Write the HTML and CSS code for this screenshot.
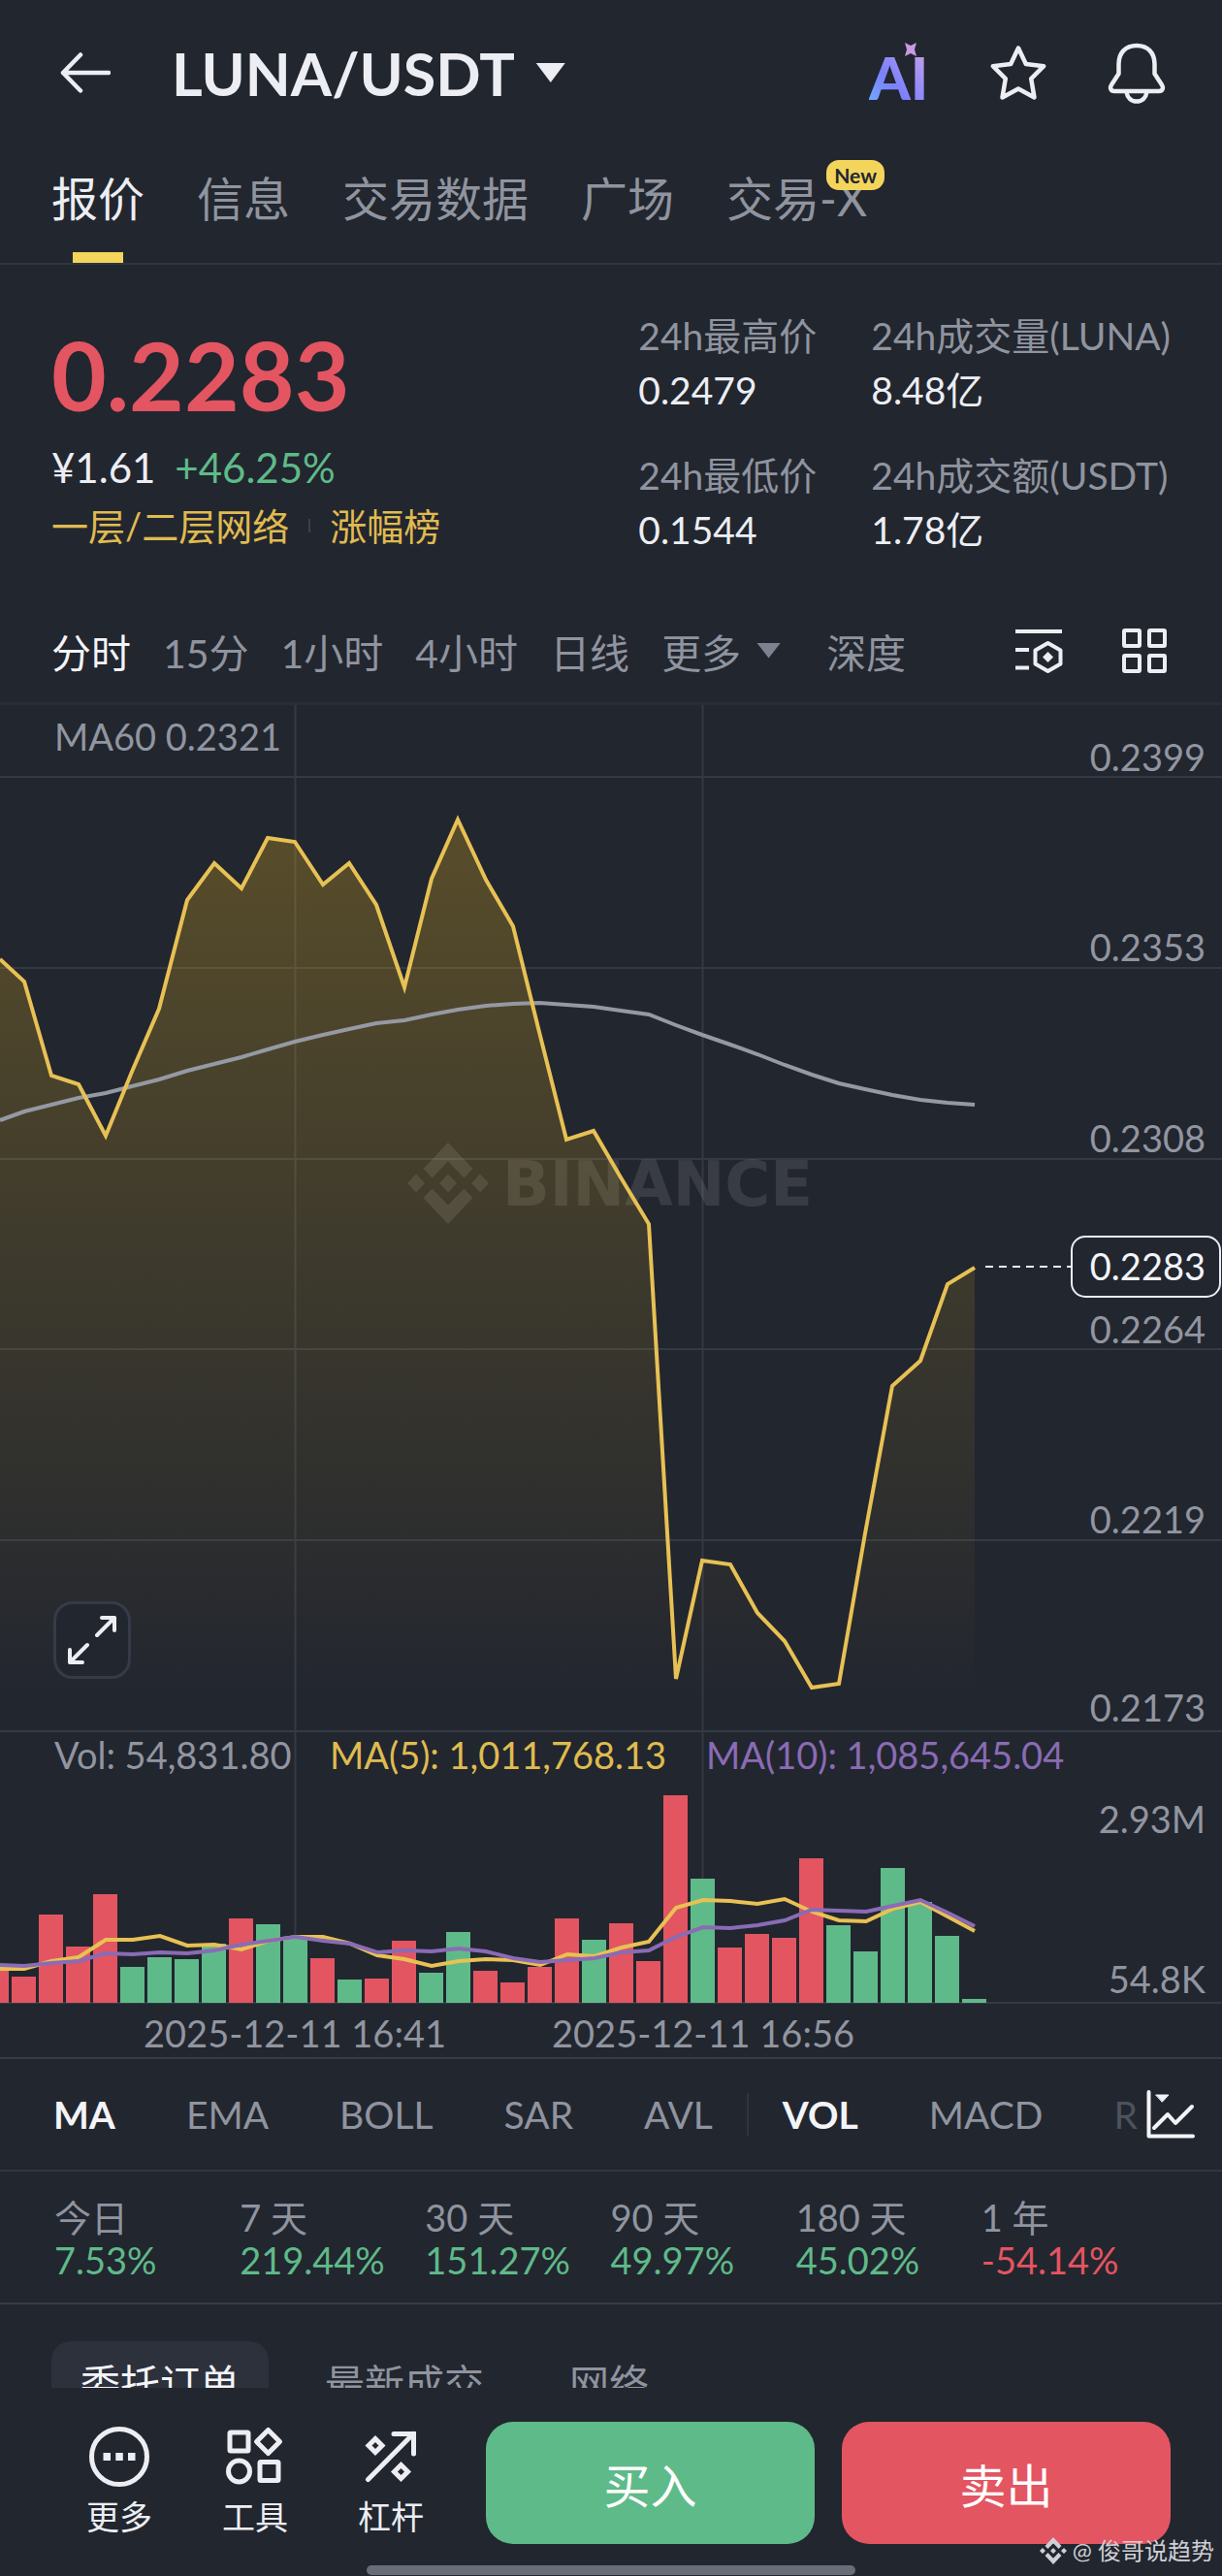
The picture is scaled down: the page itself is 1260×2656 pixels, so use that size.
FILE: index.html
```
<!DOCTYPE html>
<html lang="zh-CN">
<head>
    <meta charset="UTF-8">
    <meta name="viewport" content="width=device-width, initial-scale=1.0">
    <title>LUNA/USDT</title>
    <link rel="stylesheet" href="styles.css">
</head>
<body>
    <header class="topbar">
        <button class="icon-btn" aria-label="返回">
            <svg width="52" height="42" viewBox="0 0 52 42" fill="none" stroke="#eceef3" stroke-width="4.500" stroke-linecap="round" stroke-linejoin="round">
                <path d="M50 21H3M21 2.500L3 21l18 18.500"/>
            </svg>
        </button>
        <button class="pair">LUNA/USDT <span class="caret"></span></button>
        <div class="topbar-actions">
            <button class="icon-btn" aria-label="AI">
                <svg width="62" height="64" viewBox="0 0 62 64">
                    <defs>
                        <linearGradient id="aiFill" x1="0" y1="1" x2="1" y2="0">
                            <stop offset="0" stop-color="#6cb4ff"/>
                            <stop offset="0.4" stop-color="#7b80fb"/>
                            <stop offset="0.8" stop-color="#b49af0"/>
                            <stop offset="1" stop-color="#f0a878"/>
                        </linearGradient>
                    </defs>
                    <text x="0" y="60" class="ai-text" fill="url(#aiFill)">AI</text>
                    <path d="M37 1l6 3 6-3-2 7 2 7-6-3-6 3 2-7z" fill="#c79be0"/>
                </svg>
            </button>
            <button class="icon-btn" aria-label="收藏">
                <svg width="60" height="60" viewBox="0 0 60 60" fill="none" stroke="#eceef3" stroke-width="4.500" stroke-linejoin="round">
                    <path d="M30 4.500l7.800 16.500 18.400 2.200-13 13 3.300 19.300L30 46.500 13.500 55.500l3.300-19.300-13-13 18.400-2.200z"/>
                </svg>
            </button>
            <button class="icon-btn" aria-label="提醒">
                <svg width="60" height="64" viewBox="0 0 60 64" fill="none" stroke="#eceef3" stroke-width="4.500" stroke-linejoin="round">
                    <path d="M30 4C18 4 11.500 12 11.500 23v10L4 44.500c-2 3.500-.5 6.500 3 6.500h46c3.500 0 5-3 3-6.500L48.500 33V23C48.500 12 42 4 30 4z"/>
                    <path d="M19.500 52c1 6 5 9.500 10.500 9.500S39.500 58 40.500 52"/>
                </svg>
            </button>
        </div>
    </header>

    <nav class="tabs">
        <a href="#" class="tab active">报价</a>
        <a href="#" class="tab">信息</a>
        <a href="#" class="tab">交易数据</a>
        <a href="#" class="tab">广场</a>
        <a href="#" class="tab">交易-X<span class="badge">New</span></a>
    </nav>

    <section class="summary">
        <div class="quote">
            <div class="price">0.2283</div>
            <div class="change"><span>¥1.61</span><span class="up">+46.25%</span></div>
            <div class="tags">
                <a href="#">一层/二层网络</a>
                <span class="tag-line"></span>
                <a href="#">涨幅榜</a>
            </div>
        </div>
        <dl class="stats">
            <div><dt>24h最高价</dt><dd>0.2479</dd></div>
            <div><dt>24h成交量(LUNA)</dt><dd>8.48亿</dd></div>
            <div><dt>24h最低价</dt><dd>0.1544</dd></div>
            <div><dt>24h成交额(USDT)</dt><dd>1.78亿</dd></div>
        </dl>
    </section>

    <div class="intervals">
        <button class="active">分时</button>
        <button>15分</button>
        <button>1小时</button>
        <button>4小时</button>
        <button>日线</button>
        <button class="more">更多 <span class="caret small"></span></button>
        <button>深度</button>
        <div class="interval-tools">
            <button class="icon-btn" aria-label="设置">
                <svg width="50" height="48" viewBox="0 0 50 48" fill="none" stroke="#eceef3" stroke-width="4">
                    <path d="M1 4h48M1 23h14M1 41.500h14"/>
                    <path d="M34.500 16l13 7.500v14l-13 7.500-13-7.500v-14z" stroke-linejoin="round"/>
                    <path d="M34.500 25l5.500 5.500-5.500 5.500-5.500-5.500z" fill="#eceef3" stroke="none"/>
                </svg>
            </button>
            <button class="icon-btn" aria-label="布局">
                <svg width="48" height="48" viewBox="0 0 48 48" fill="none" stroke="#eceef3" stroke-width="4">
                    <rect x="3" y="3" width="16" height="16" rx="1"/>
                    <rect x="29" y="3" width="16" height="16" rx="1"/>
                    <rect x="3" y="29" width="16" height="16" rx="1"/>
                    <rect x="29" y="29" width="16" height="16" rx="1"/>
                </svg>
            </button>
        </div>
    </div>

    <section class="chart">
        <svg class="chart-svg" viewBox="0 727 1260 1394">
            <defs>
                <linearGradient id="areaFill" gradientUnits="userSpaceOnUse" x1="0" y1="840" x2="0" y2="1755">
                    <stop offset="0" stop-color="#eeb81c" stop-opacity="0.270"/>
                    <stop offset="1" stop-color="#eeb81c" stop-opacity="0"/>
                </linearGradient>
            </defs>

            <!-- grid -->
            <path class="grid" d="M0 801H1260M0 998H1260M0 1195H1260M0 1391H1260M0 1588H1260M0 1785H1260M0 2065H1260M304.500 727V2065M724.500 727V2065"/>

            <!-- watermark -->
            <g class="watermark">
                <path d="M462 1178l25.500 27-9 9.500-16.500-17-16.500 17-9-9.500zM429 1210.500l9 9.500-9 9.500-9-9.500zM462 1210.500l9 9.500-9 9.500-9-9.500zM495 1210.500l9 9.500-9 9.500-9-9.500zM445.500 1225.500l16.500 17 16.500-17 9 9.500-25.500 27-25.500-27z"/>
                <text x="518" y="1243">BINANCE</text>
            </g>

            <!-- price -->
            <path fill="url(#areaFill)" d="M0 989L25 1012 53 1109 81 1118 109 1171 136 1105 164 1040 193 928 221 890 249 916 276 864 304 868 333 912 360 890 388 933 417 1018 445 906 472 845 501 907 529 955 556 1064 584 1175 612 1166 640 1214 669 1262 697 1731 724 1609 753 1613 781 1663 809 1692 837 1740 865 1736 892 1581 920 1429 949 1403 977 1324 1005 1307V1755H0z"/>
            <polyline class="line ma60" points="0,1155 25,1146 53,1139 81,1132 109,1127 136,1120 164,1113 193,1104 221,1097 249,1090 276,1082 304,1074 333,1067 360,1061 388,1055 417,1052 445,1046 472,1041 501,1037 529,1035 556,1034 584,1036 612,1038 640,1042 669,1046 697,1057 724,1067 753,1077 781,1087 809,1098 837,1108 865,1117 892,1123 920,1129 949,1134 977,1137 1005,1139"/>
            <polyline class="line yellow" points="0,989 25,1012 53,1109 81,1118 109,1171 136,1105 164,1040 193,928 221,890 249,916 276,864 304,868 333,912 360,890 388,933 417,1018 445,906 472,845 501,907 529,955 556,1064 584,1175 612,1166 640,1214 669,1262 697,1731 724,1609 753,1613 781,1663 809,1692 837,1740 865,1736 892,1581 920,1429 949,1403 977,1324 1005,1307"/>

            <!-- volume -->
            <path class="bars-red" d="M-16 2032h25v33h-25zM12 2038h25v27h-25zM40 1974h25v91h-25zM68 2007h25v58h-25zM96 1953h25v112h-25zM236 1978h25v87h-25zM320 2019h25v46h-25zM376 2040h25v25h-25zM404 2001h25v64h-25zM488 2032h25v33h-25zM516 2044h25v21h-25zM544 2028h25v37h-25zM572 1978h25v87h-25zM628 1983h25v82h-25zM656 2022h25v43h-25zM684 1851h25v214h-25zM740 2008h25v57h-25zM768 1994h25v71h-25zM796 1998h25v67h-25zM824 1916h25v149h-25z"/>
            <path class="bars-green" d="M124 2028h25v37h-25zM152 2018h25v47h-25zM180 2020h25v45h-25zM208 2004h25v61h-25zM264 1984h25v81h-25zM292 1998h25v67h-25zM348 2041h25v24h-25zM432 2034h25v31h-25zM460 1992h25v73h-25zM600 2000h25v65h-25zM712 1937h25v128h-25zM852 1985h25v80h-25zM880 2012h25v53h-25zM908 1926h25v139h-25zM936 1961h25v104h-25zM964 1996h25v69h-25zM992 2061h25v4h-25z"/>
            <polyline class="line yellow" points="0,2030 25,2030 53,2022 81,2018 109,2000 137,2000 165,1996 193,2006 221,2005 249,2010 277,2001 305,1997 333,1997 361,2004 389,2016 417,2020 445,2027 473,2022 501,2020 529,2021 557,2026 585,2015 613,2017 641,2008 669,2002 697,1967 725,1959 753,1960 781,1963 809,1958 837,1971 865,1980 893,1981 921,1968 949,1961 977,1976 1005,1991"/>
            <polyline class="line purple" points="0,2026 25,2027 53,2024 81,2022 109,2014 137,2015 165,2013 193,2014 221,2011 249,2005 277,2001 305,1997 333,2001 361,2004 389,2013 417,2011 445,2012 473,2009 501,2012 529,2019 557,2023 585,2021 613,2019 641,2013 669,2011 697,1997 725,1987 753,1988 781,1985 809,1980 837,1969 865,1970 893,1971 921,1965 949,1959 977,1972 1005,1986"/>

            <!-- current price -->
            <path d="M1016 1306H1104" stroke="#eceef3" stroke-width="2" stroke-dasharray="8 6"/>
            <rect x="1105" y="1275" width="153" height="62" rx="14" fill="#22262f" stroke="#eceef3" stroke-width="2"/>

            <g class="labels">
                <text x="56" y="774">MA60 0.2321</text>
                <text x="56" y="1824">Vol: 54,831.80</text>
                <text x="340" y="1824" class="yellow-text">MA(5): 1,011,768.13</text>
                <text x="728" y="1824" class="purple-text">MA(10): 1,085,645.04</text>
            </g>
            <g class="labels axis">
                <text x="1243" y="795">0.2399</text>
                <text x="1243" y="991">0.2353</text>
                <text x="1243" y="1188">0.2308</text>
                <text x="1243" y="1320" class="current">0.2283</text>
                <text x="1243" y="1385">0.2264</text>
                <text x="1243" y="1581">0.2219</text>
                <text x="1243" y="1775">0.2173</text>
                <text x="1243" y="1890">2.93M</text>
                <text x="1243" y="2055">54.8K</text>
            </g>
            <g class="labels dates">
                <text x="304" y="2111">2025-12-11 16:41</text>
                <text x="725" y="2111">2025-12-11 16:56</text>
            </g>
        </svg>
        <button class="expand" aria-label="全屏">
            <svg width="50" height="50" viewBox="0 0 50 50" fill="none" stroke="#eceef3" stroke-width="4" stroke-linecap="round" stroke-linejoin="round">
                <path d="M30 20L48 2M35 2h13v13M20 30L2 48M2 35v13h13"/>
            </svg>
        </button>
    </section>

    <div class="indicators">
        <div class="indicator-list">
            <button class="active">MA</button>
            <button>EMA</button>
            <button>BOLL</button>
            <button>SAR</button>
            <button>AVL</button>
            <span class="divider"></span>
            <button class="active">VOL</button>
            <button>MACD</button>
            <button class="faded">R</button>
        </div>
        <button class="icon-btn" aria-label="指标">
            <svg width="50" height="50" viewBox="0 0 50 50" fill="none" stroke="#f3f4f8" stroke-width="4" stroke-linecap="round" stroke-linejoin="round">
                <path d="M2.500 2v45.500H48"/>
                <path d="M8 39l14-14 8 9 17-17"/>
                <path d="M10 5h13l-6.500 7z" fill="#f3f4f8" stroke-width="1"/>
            </svg>
        </button>
    </div>

    <dl class="periods">
        <div><dt>今日</dt><dd>7.53%</dd></div>
        <div><dt>7 天</dt><dd>219.44%</dd></div>
        <div><dt>30 天</dt><dd>151.27%</dd></div>
        <div><dt>90 天</dt><dd>49.97%</dd></div>
        <div><dt>180 天</dt><dd>45.02%</dd></div>
        <div><dt>1 年</dt><dd class="down">-54.14%</dd></div>
    </dl>

    <div class="orders">
        <button class="active">委托订单</button>
        <button>最新成交</button>
        <button>网络</button>
    </div>

    <footer class="bottombar">
        <div class="actions">
            <button class="action">
                <svg width="64" height="64" viewBox="0 0 64 64" fill="none" stroke="#eceef3" stroke-width="5">
                    <circle cx="32" cy="32" r="28.500"/>
                    <path d="M15.500 32h7.500M28.300 32h7.500M41 32h7.500" stroke-width="8"/>
                </svg>
                更多
            </button>
            <button class="action">
                <svg width="64" height="64" viewBox="0 0 64 64" fill="none" stroke="#eceef3" stroke-width="5" stroke-linejoin="round">
                    <rect x="6" y="7" width="19" height="19" rx="1"/>
                    <path d="M45.500 4.500l12 12-12 12-12-12z"/>
                    <circle cx="15.500" cy="47" r="11"/>
                    <rect x="37" y="37.500" width="19" height="19" rx="1"/>
                </svg>
                工具
            </button>
            <button class="action">
                <svg width="64" height="64" viewBox="0 0 64 64" fill="none" stroke="#eceef3" stroke-width="5" stroke-linecap="round">
                    <path d="M8.500 55.500L55 8.500M35 8.500h20.500V29"/>
                    <path d="M16 13.500l7 7-7 7-7-7zM42.500 40.500l7 7-7 7-7-7z"/>
                </svg>
                杠杆
            </button>
        </div>
        <button class="trade buy">买入</button>
        <button class="trade sell">卖出</button>
        <div class="home-line"></div>
        <div class="author">
            <svg width="28" height="28" viewBox="0 0 28 28" fill="#cfd0d5">
                <path d="M14 0l8.500 9-3 3-5.500-5.800L8.500 12l-3-3zM3 11l3 3-3 3-3-3zM14 11l3 3-3 3-3-3zM25 11l3 3-3 3-3-3zM8.500 16l5.500 5.800 5.500-5.800 3 3-8.500 9-8.500-9z"/>
            </svg>
            @ 俊哥说趋势
        </div>
    </footer>
</body>
</html>
```
FILE: styles.css
```
* {
    box-sizing: border-box;
}

body {
    margin: 0;
    background-color: #22262f;
    color: #eceef3;
    font-family: Lato, "Noto Sans CJK SC", sans-serif;
    font-size: 38px;
}

button {
    background: none;
    border: none;
    padding: 0;
    color: inherit;
    font: inherit;
    white-space: nowrap;
    cursor: pointer;
}

a {
    color: inherit;
    text-decoration: none;
    white-space: nowrap;
}

svg {
    display: block;
}

dl, dd {
    margin: 0;
}

.icon-btn {
    flex: none;
}

/* header */
.topbar {
    display: flex;
    align-items: center;
    height: 150px;
    padding: 0 58px 0 62px;
}

.pair {
    display: flex;
    align-items: center;
    gap: 22px;
    margin-left: 63px;
    font-size: 61px;
    font-weight: bold;
}

.caret {
    width: 30px;
    height: 20px;
    background-color: #eceef3;
    clip-path: polygon(0 0, 100% 0, 50% 100%);
}

.caret.small {
    width: 25px;
    height: 16px;
    background-color: #7d828e;
}

.topbar-actions {
    display: flex;
    align-items: center;
    gap: 62px;
    margin-left: auto;
}

.ai-text {
    font-size: 61px;
    font-weight: 900;
}

/* tabs */
.tabs {
    display: flex;
    gap: 54px;
    padding: 27px 53px 0;
    border-bottom: 2px solid #30353f;
}

.tab {
    position: relative;
    height: 94px;
    font-size: 48px;
    line-height: 56px;
    color: #8f949f;
}

.tab.active {
    color: #eceef3;
}

.tab.active::after {
    content: "";
    position: absolute;
    left: 50%;
    bottom: 0;
    width: 52px;
    height: 11px;
    margin-left: -26px;
    background-color: #f3d55b;
}

.badge {
    position: absolute;
    right: -18px;
    top: -12px;
    padding: 0 8px;
    border-radius: 13px;
    background-color: #f3d55b;
    color: #22262f;
    font-size: 21px;
    font-weight: bold;
    line-height: 31px;
}

/* price and 24h stats */
.summary {
    display: flex;
    justify-content: space-between;
    padding: 45px 53px 0;
}

.price {
    margin-top: 20px;
    color: #e35561;
    font-size: 98px;
    font-weight: bold;
    line-height: 96px;
}

.change {
    display: flex;
    gap: 20px;
    margin-top: 24px;
    font-size: 42px;
    line-height: 48px;
}

.up {
    color: #5fba89;
}

.tags {
    display: flex;
    align-items: center;
    margin-top: 12px;
    color: #e0bb50;
    line-height: 48px;
}

.tag-line {
    width: 2px;
    height: 14px;
    margin: 0 20px;
    background-color: #3a404c;
}

.stats {
    display: grid;
    grid-template-columns: auto auto;
    gap: 32px 56px;
    font-size: 39px;
    line-height: 56px;
    white-space: nowrap;
}

.stats dt, .periods dt {
    color: #8f949f;
}

/* intervals */
.intervals {
    display: flex;
    align-items: center;
    gap: 33px;
    height: 153px;
    padding: 48px 56px 5px 53px;
    border-bottom: 3px solid #282d37;
    color: #8f949f;
    font-size: 41px;
}

.intervals .active, .indicators .active, .orders .active {
    color: #f3f4f8;
}

.more {
    display: flex;
    align-items: center;
    gap: 16px;
    margin-right: 14px;
}

.interval-tools {
    display: flex;
    gap: 60px;
    margin-left: auto;
}

/* chart */
.chart {
    position: relative;
    border-bottom: 2px solid #363b47;
}

.chart-svg {
    width: 100%;
    height: auto;
}

.grid {
    stroke: #343944;
    stroke-width: 2;
}

.watermark {
    fill: #ffffff;
    opacity: 0.1;
    font-family: "DejaVu Sans", sans-serif;
    font-size: 64px;
    font-weight: bold;
}

.line {
    fill: none;
    stroke-width: 4;
}

.line.yellow {
    stroke: #e8c154;
}

.line.purple {
    stroke: #8a6bb5;
}

.line.ma60 {
    stroke: #9599a4;
}

.bars-red {
    fill: #e35561;
}

.bars-green {
    fill: #5fba89;
}

.labels {
    fill: #9195a0;
    font-size: 38px;
}

.axis {
    text-anchor: end;
}

.dates {
    text-anchor: middle;
}

.yellow-text {
    fill: #dfbb50;
}

.purple-text {
    fill: #8a6bb5;
}

.current {
    fill: #f3f4f8;
}

.expand {
    position: absolute;
    left: 55px;
    bottom: 390px;
    display: flex;
    align-items: center;
    justify-content: center;
    width: 80px;
    height: 80px;
    border: 3px solid #363b47;
    border-radius: 20px;
    background-color: #22262f;
}

/* indicators */
.indicators {
    display: flex;
    align-items: center;
    height: 116px;
    padding: 0 28px 0 55px;
    border-bottom: 2px solid #30353f;
    color: #8f949f;
    font-size: 39px;
}

.indicator-list {
    display: flex;
    flex: 1;
    align-items: center;
    gap: 73px;
    min-width: 0;
    overflow: hidden;
}

.indicators .active {
    font-weight: bold;
}

.divider {
    flex: none;
    width: 2px;
    height: 44px;
    margin: 0 -38px;
    background-color: #30353f;
}

.faded {
    opacity: 0.4;
}

/* performance */
.periods {
    display: grid;
    grid-template-columns: repeat(6, 1fr);
    padding: 25px 57px 22px 56px;
    border-bottom: 2px solid #363b47;
    line-height: 44px;
    white-space: nowrap;
}

.periods dd {
    color: #5fba89;
}

.periods .down {
    color: #e35561;
}

/* order tabs, cut off by the bottom bar */
.orders {
    display: flex;
    gap: 28px;
    height: 86px;
    padding: 38px 53px 0;
    overflow: hidden;
    color: #8f949f;
    font-size: 41px;
}

.orders button {
    flex: none;
    height: 82px;
    padding: 0 30px;
    border-radius: 20px;
}

.orders .active {
    background-color: #2c313c;
}

/* bottom bar */
.bottombar {
    position: relative;
    display: flex;
    gap: 28px;
    height: 194px;
    padding: 35px 53px 0;
}

.actions {
    display: flex;
    flex: 420 1 0;
    align-items: flex-start;
}

.action {
    display: flex;
    flex: 1;
    flex-direction: column;
    align-items: center;
    gap: 6px;
    padding-top: 4px;
    font-size: 34px;
    line-height: 48px;
}

.trade {
    flex: 339 1 0;
    height: 126px;
    border-radius: 28px;
    color: #ffffff;
    font-size: 48px;
}

.buy {
    background-color: #5fba89;
}

.sell {
    background-color: #e35561;
}

.home-line {
    position: absolute;
    left: 30%;
    right: 30%;
    bottom: 1px;
    height: 10px;
    border-radius: 5px;
    background-color: #696d78;
}

.author {
    position: absolute;
    right: 8px;
    bottom: 8px;
    display: flex;
    align-items: center;
    gap: 6px;
    color: #cfd0d5;
    font-size: 24px;
    line-height: 36px;
}
```
